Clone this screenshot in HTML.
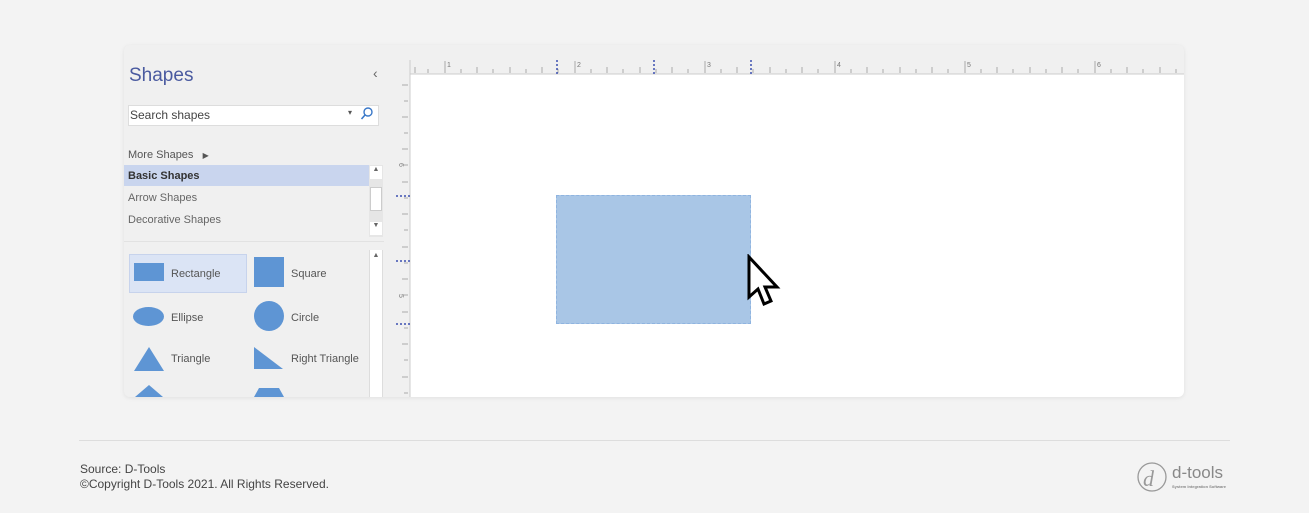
<!DOCTYPE html>
<html><head><style>
body{margin:0;width:1309px;height:513px;background:#f3f3f3;font-family:"Liberation Sans",sans-serif;position:relative;overflow:hidden}
.a{position:absolute}
.card{left:124px;top:45px;width:1060px;height:352px;background:#f0f0f0;border-radius:6px;overflow:hidden;box-shadow:0 1px 4px rgba(0,0,0,.08)}
.t{font-size:11px;color:#555}
</style></head><body>
<div class="a card">
 <div class="a" style="left:5px;top:20px;font-size:19px;color:#4a5aa0">Shapes</div>
 <div class="a" style="left:249px;top:20px;font-size:14px;color:#666">‹</div>
 <div class="a" style="left:4px;top:60px;width:249px;height:19px;background:#fff;border:1px solid #ddd"></div>
 <div class="a t" style="left:6px;top:63px;font-size:12px;color:#444">Search shapes</div>
 <div class="a" style="left:224px;top:63px;font-size:8px;color:#555">▾</div>
 <svg class="a" style="left:236px;top:61px" width="14" height="14"><circle cx="8" cy="6" r="4" fill="none" stroke="#3a78c8" stroke-width="1.4"/><line x1="5" y1="9" x2="1.5" y2="13" stroke="#3a78c8" stroke-width="1.6"/></svg>
 <div class="a t" style="left:4px;top:104px">More Shapes &nbsp; <span style="font-size:8px">▶</span></div>
 <div class="a" style="left:0;top:120px;width:245px;height:21px;background:#c9d5ee"></div>
 <div class="a t" style="left:4px;top:125px;font-weight:bold;color:#333">Basic Shapes</div>
 <div class="a t" style="left:4px;top:147px;color:#666">Arrow Shapes</div>
 <div class="a t" style="left:4px;top:169px;color:#666">Decorative Shapes</div>
 <div class="a" style="left:245px;top:120px;width:14px;height:72px;background:#e6e6e6"></div>
 <div class="a" style="left:246px;top:121px;width:12px;height:13px;background:#fff;font-size:7px;text-align:center;color:#666">▲</div>
 <div class="a" style="left:246px;top:142px;width:12px;height:24px;background:#fff;border:1px solid #ccc;box-sizing:border-box"></div>
 <div class="a" style="left:246px;top:177px;width:12px;height:13px;background:#fff;font-size:7px;text-align:center;color:#666">▼</div>
 <div class="a" style="left:0;top:196px;width:260px;height:1px;background:#e2e2e2"></div>
 <div class="a" style="left:5px;top:209px;width:116px;height:37px;background:#dbe4f5;border:1px solid #c7d3ec"></div>
 <div class="a" style="left:10px;top:218px;width:30px;height:18px;background:#5e95d4"></div>
 <div class="a t" style="left:47px;top:223px">Rectangle</div>
 <div class="a" style="left:130px;top:212px;width:30px;height:30px;background:#5e95d4"></div>
 <div class="a t" style="left:167px;top:223px">Square</div>
 <div class="a" style="left:9px;top:262px;width:31px;height:19px;border-radius:50%;background:#5e95d4"></div>
 <div class="a t" style="left:47px;top:267px">Ellipse</div>
 <div class="a" style="left:130px;top:256px;width:30px;height:30px;border-radius:50%;background:#5e95d4"></div>
 <div class="a t" style="left:167px;top:267px">Circle</div>
 <svg class="a" style="left:9px;top:300px" width="32" height="28"><polygon points="16,2 31,26 1,26" fill="#5e95d4"/></svg>
 <div class="a t" style="left:47px;top:308px">Triangle</div>
 <svg class="a" style="left:130px;top:302px" width="30" height="22"><polygon points="0,0 29,22 0,22" fill="#5e95d4"/></svg>
 <div class="a t" style="left:167px;top:308px">Right Triangle</div>
 <svg class="a" style="left:9px;top:340px" width="32" height="12"><polygon points="16,0 30,12 2,12" fill="#5e95d4"/></svg>
 <svg class="a" style="left:130px;top:343px" width="32" height="9"><polygon points="5,0 25,0 30,9 0,9" fill="#5e95d4"/></svg>
 <div class="a" style="left:245px;top:205px;width:14px;height:147px;background:#fff;border-left:1px solid #ddd;border-right:1px solid #ddd;box-sizing:border-box"></div>
 <div class="a" style="left:246px;top:207px;font-size:7px;color:#666;width:12px;text-align:center">▲</div>
 <svg class="a" style="left:268px;top:0" width="792" height="352">
  <rect x="18" y="29" width="774" height="323" fill="#fff"/>
  <line x1="18" y1="29" x2="792" y2="29" stroke="#ccc"/>
  <line x1="18" y1="15" x2="18" y2="352" stroke="#ccc"/>
  <g stroke="#aaa" stroke-width="1">
   <path d="M23 22v6M36 24v4M53 22v6M69 24v4M85 22v6M101 24v4M118 22v6M134 24v4M150 22v6M166 24v4M183 22v6M199 24v4M215 22v6M231 24v4M248 22v6M264 24v4M280 22v6M296 24v4M313 22v6M329 24v4M345 22v6M361 24v4M378 22v6M394 24v4M410 22v6M426 24v4M443 22v6M459 24v4M475 22v6M491 24v4M508 22v6M524 24v4M540 22v6M556 24v4M573 22v6M589 24v4M605 22v6M621 24v4M638 22v6M654 24v4M670 22v6M686 24v4M703 22v6M719 24v4M735 22v6M751 24v4M768 22v6M784 24v4"/>
   <path d="M53 16v12M183 16v12M313 16v12M443 16v12M573 16v12M703 16v12"/>
   <path d="M10 40h6M12 56h4M10 72h6M12 88h4M10 104h6M12 120h4M10 137h6M12 153h4M10 169h6M12 185h4M10 202h6M12 218h4M10 234h6M12 250h4M10 267h6M12 283h4M10 299h6M12 315h4M10 332h6M12 348h4"/>
  </g>
  <g fill="#777" font-size="7" font-family="Liberation Sans"><text x="55" y="22">1</text><text x="185" y="22">2</text><text x="315" y="22">3</text><text x="445" y="22">4</text><text x="575" y="22">5</text><text x="705" y="22">6</text>
  <text x="5" y="120" transform="rotate(90 7 120)">6</text><text x="5" y="251" transform="rotate(90 7 251)">5</text></g>
  <g stroke="#3a4fb0" stroke-width="1.5" stroke-dasharray="2 2"><path d="M165 15v14M262 15v14M359 15v14M4 151h14M4 216h14M4 279h14"/></g>
 </svg>
</div>
<div class="a" style="left:556px;top:195px;width:195px;height:129px;background:#a9c6e6;border:1px dashed #8fb4e0;box-sizing:border-box"></div>
<svg class="a" style="left:746px;top:254px" width="36" height="58"><path d="M3 3 L3 43 L12 35 L18 50 L25 47 L19 33 L31 33 Z" fill="#fff" stroke="#000" stroke-width="3" stroke-linejoin="miter"/></svg>
<div class="a" style="left:79px;top:440px;width:1151px;height:1px;background:#ddd"></div>
<div class="a" style="left:80px;top:462px;font-size:12px;color:#444">Source: D-Tools</div>
<div class="a" style="left:80px;top:477px;font-size:12px;color:#444">©Copyright D-Tools 2021. All Rights Reserved.</div>
<svg class="a" style="left:1136px;top:460px" width="34" height="34"><circle cx="16" cy="17" r="14" fill="none" stroke="#999" stroke-width="1.3"/><text x="7" y="26" font-size="22" font-style="italic" font-family="Liberation Serif" fill="#999">d</text></svg>
<div class="a" style="left:1172px;top:463px;font-size:17px;color:#888">d-tools</div>
<div class="a" style="left:1172px;top:484px;font-size:4px;color:#888;font-weight:bold">System Integration Software</div>
</body></html>
